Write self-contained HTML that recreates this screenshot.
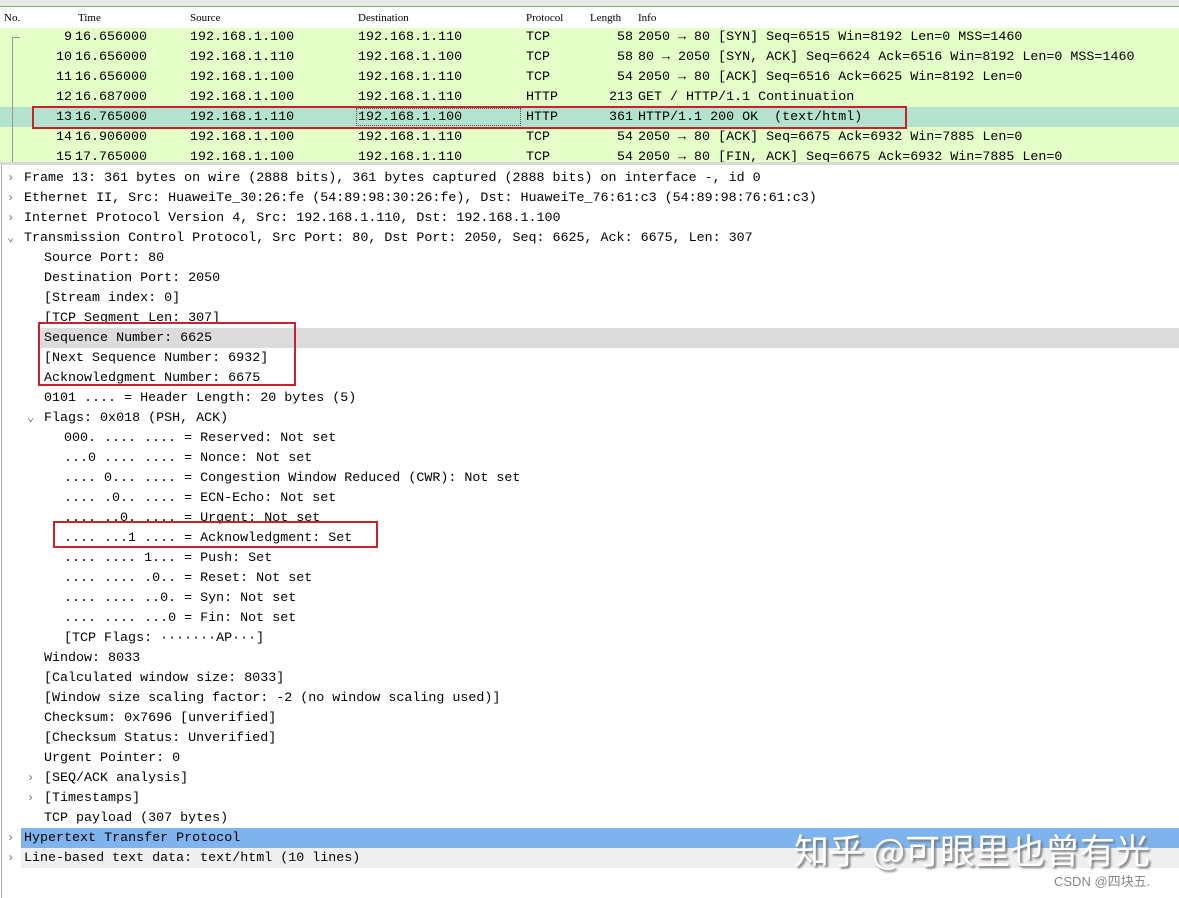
<!DOCTYPE html>
<html><head><meta charset="utf-8"><style>
body{margin:0;width:1179px;height:898px;overflow:hidden;background:#fff;position:relative;font-family:"Liberation Mono","DejaVu Sans Mono",monospace;font-size:13.35px;color:#000}
.r{position:absolute;left:0;width:1179px;height:20px}
.t{position:absolute;white-space:pre;line-height:20px;top:1px}
.h{position:absolute;top:8px;height:20px;font-family:"Liberation Serif",serif;font-size:11px;line-height:20px;white-space:pre}
.box{position:absolute;border:2px solid #c8232c;box-sizing:border-box}
.a{position:absolute;color:#777;font-size:12px;line-height:20px}
.d{position:absolute;white-space:pre;line-height:20px;height:20px}
</style></head><body>
<div style="position:absolute;left:0;top:0;width:1179px;height:6px;background:#e8e8e8;border-bottom:1px solid #7cbf6a"></div>
<div style="position:absolute;left:0;top:7px;width:1179px;height:21px;background:#fff;border-bottom:1px solid #ddd"></div>
<div class="h" style="left:4px">No.</div>
<div class="h" style="left:78px">Time</div>
<div class="h" style="left:190px">Source</div>
<div class="h" style="left:358px">Destination</div>
<div class="h" style="left:526px">Protocol</div>
<div class="h" style="left:590px">Length</div>
<div class="h" style="left:638px">Info</div>
<div style="position:absolute;left:0;top:28px;width:1179px;height:134px;background:#e4ffc7"></div>
<div style="position:absolute;left:0;top:107px;width:1179px;height:20px;background:#b3e3cf"></div>
<div style="position:absolute;left:12px;top:37px;width:1px;height:125px;background:#999"></div>
<div style="position:absolute;left:12px;top:37px;width:8px;height:1px;background:#999"></div>
<div id="pl"></div>
<div class="box" style="left:32px;top:106px;width:875px;height:23px"></div>
<div style="position:absolute;left:356px;top:108px;width:165px;height:18px;border:1px dotted #555;box-sizing:border-box"></div>
<div style="position:absolute;left:0;top:162px;width:1179px;height:3px;background:#d8d8d8"></div>
<div style="position:absolute;left:1px;top:165px;width:1px;height:733px;background:#aaa"></div>
<div style="position:absolute;left:40px;top:328px;width:1139px;height:20px;background:#dcdcdc"></div>
<div style="position:absolute;left:21px;top:828px;width:1158px;height:20px;background:#7eb3ee"></div>
<div style="position:absolute;left:21px;top:848px;width:1158px;height:20px;background:#efefef"></div>
<div id="dl"></div>
<div class="box" style="left:38px;top:322px;width:258px;height:64px"></div>
<div class="box" style="left:53px;top:521px;width:325px;height:27px"></div>
<div style="position:absolute;left:794px;top:826px;font-family:'Noto Sans CJK SC',sans-serif;font-size:35px;line-height:48px;color:#fff;text-shadow:2px 2px 2px #777;white-space:nowrap">知乎 @可眼里也曾有光</div>
<div style="position:absolute;left:1054px;top:871px;font-family:'Liberation Sans','Noto Sans CJK SC',sans-serif;font-size:13px;color:#888;white-space:nowrap">CSDN @四块五.</div>
<script>
var P=[["9","16.656000","192.168.1.100","192.168.1.110","TCP","58","2050 → 80 [SYN] Seq=6515 Win=8192 Len=0 MSS=1460"],
["10","16.656000","192.168.1.110","192.168.1.100","TCP","58","80 → 2050 [SYN, ACK] Seq=6624 Ack=6516 Win=8192 Len=0 MSS=1460"],
["11","16.656000","192.168.1.100","192.168.1.110","TCP","54","2050 → 80 [ACK] Seq=6516 Ack=6625 Win=8192 Len=0"],
["12","16.687000","192.168.1.100","192.168.1.110","HTTP","213","GET / HTTP/1.1 Continuation"],
["13","16.765000","192.168.1.110","192.168.1.100","HTTP","361","HTTP/1.1 200 OK  (text/html)"],
["14","16.906000","192.168.1.100","192.168.1.110","TCP","54","2050 → 80 [ACK] Seq=6675 Ack=6932 Win=7885 Len=0"],
["15","17.765000","192.168.1.100","192.168.1.110","TCP","54","2050 → 80 [FIN, ACK] Seq=6675 Ack=6932 Win=7885 Len=0"]];
var h="";P.forEach(function(p,i){var y=27+i*20;
h+='<div class="r" style="top:'+y+'px;height:'+(i==6?(162-y):20)+'px;overflow:hidden">'+
'<div class="t" style="right:1107px;text-align:right">'+p[0]+'</div>'+
'<div class="t" style="left:75px">'+p[1]+'</div><div class="t" style="left:190px">'+p[2]+'</div>'+
'<div class="t" style="left:358px">'+p[3]+'</div><div class="t" style="left:526px">'+p[4]+'</div>'+
'<div class="t" style="right:546px;text-align:right">'+p[5]+'</div><div class="t" style="left:638px">'+p[6]+'</div></div>';});
document.getElementById("pl").innerHTML=h;
var D=[[0,">","Frame 13: 361 bytes on wire (2888 bits), 361 bytes captured (2888 bits) on interface -, id 0"],
[0,">","Ethernet II, Src: HuaweiTe_30:26:fe (54:89:98:30:26:fe), Dst: HuaweiTe_76:61:c3 (54:89:98:76:61:c3)"],
[0,">","Internet Protocol Version 4, Src: 192.168.1.110, Dst: 192.168.1.100"],
[0,"v","Transmission Control Protocol, Src Port: 80, Dst Port: 2050, Seq: 6625, Ack: 6675, Len: 307"],
[1,"","Source Port: 80"],[1,"","Destination Port: 2050"],[1,"","[Stream index: 0]"],[1,"","[TCP Segment Len: 307]"],
[1,"","Sequence Number: 6625"],[1,"","[Next Sequence Number: 6932]"],[1,"","Acknowledgment Number: 6675"],
[1,"","0101 .... = Header Length: 20 bytes (5)"],[1,"v","Flags: 0x018 (PSH, ACK)"],
[2,"","000. .... .... = Reserved: Not set"],[2,"","...0 .... .... = Nonce: Not set"],
[2,"",".... 0... .... = Congestion Window Reduced (CWR): Not set"],[2,"",".... .0.. .... = ECN-Echo: Not set"],
[2,"",".... ..0. .... = Urgent: Not set"],[2,"",".... ...1 .... = Acknowledgment: Set"],
[2,"",".... .... 1... = Push: Set"],[2,"",".... .... .0.. = Reset: Not set"],[2,"",".... .... ..0. = Syn: Not set"],
[2,"",".... .... ...0 = Fin: Not set"],[2,"","[TCP Flags: ·······AP···]"],
[1,"","Window: 8033"],[1,"","[Calculated window size: 8033]"],[1,"","[Window size scaling factor: -2 (no window scaling used)]"],
[1,"","Checksum: 0x7696 [unverified]"],[1,"","[Checksum Status: Unverified]"],[1,"","Urgent Pointer: 0"],
[1,">","[SEQ/ACK analysis]"],[1,">","[Timestamps]"],[1,"","TCP payload (307 bytes)"],
[0,">","Hypertext Transfer Protocol"],[0,">","Line-based text data: text/html (10 lines)"]];
h="";D.forEach(function(d,i){var y=168+i*20,x=24+d[0]*20;
if(d[1])h+='<div class="a" style="left:'+(x-17)+'px;top:'+y+'px">'+(d[1]==">"?"›":"⌄")+'</div>';
h+='<div class="d" style="left:'+x+'px;top:'+(y+1)+'px">'+d[2]+'</div>';});
document.getElementById("dl").innerHTML=h;
</script>
</body></html>
